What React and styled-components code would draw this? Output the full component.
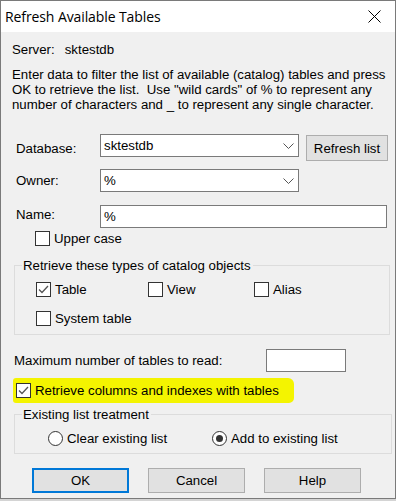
import React from "react";
import styled, { createGlobalStyle } from "styled-components";

const GlobalStyle = createGlobalStyle`
  html, body {
    margin: 0;
    padding: 0;
    background: #d4d4d4;
  }
  body {
    font-family: "Liberation Sans", Arial, sans-serif;
    font-size: 13.25px;
    color: #000;
  }
  * {
    box-sizing: border-box;
  }
`;

const Window = styled.div`
  width: 396px;
  height: 499px;
  border: 1px solid #7a7a7a;
  display: flex;
  flex-direction: column;
  background: #f0f0f0;
`;

const TitleBar = styled.div`
  height: 31px;
  background: #fff;
  display: flex;
  align-items: center;
  justify-content: space-between;
  padding: 0 14px 0 4px;
  flex-shrink: 0;
`;

const Title = styled.span`
  font-family: "Open Sans", "Liberation Sans", sans-serif;
  font-size: 14px;
  letter-spacing: -0.1px;
  color: #000;
`;

const CloseIcon = styled.svg`
  width: 13px;
  height: 13px;
  display: block;
`;

const Body = styled.div`
  flex: 1;
  display: flex;
  flex-direction: column;
  padding: 10px 0 0 11px;
  line-height: 15px;
`;

const Server = styled.div`
  display: flex;
  gap: 10px;
`;

const Intro = styled.p`
  margin: 10px 0 0;
  width: 382px;
`;

const Row = styled.div`
  display: flex;
  align-items: flex-start;
  margin-top: ${(p) => p.$top || 0}px;
  padding-left: ${(p) => p.$indent || 0}px;
`;

const FieldLabel = styled.label`
  width: 84px;
  flex-shrink: 0;
  line-height: 23px;
  position: relative;
  top: ${(p) => p.$shift || 0}px;
`;

const SelectBox = styled.div`
  width: 199px;
  height: 23px;
  background: #fff;
  border: 1px solid #7a7a7a;
  display: flex;
  align-items: center;
  justify-content: space-between;
  padding: 0 4px 0 3px;
`;

const Chevron = styled.svg`
  width: 11px;
  height: 6px;
  display: block;
`;

const TextInput = styled.div`
  width: ${(p) => p.$width}px;
  height: 23px;
  background: #fff;
  border: 1px solid #7a7a7a;
  display: flex;
  align-items: center;
  padding: 0 3px;
`;

const Button = styled.button`
  width: ${(p) => p.$width || 97}px;
  height: ${(p) => p.$height || 25}px;
  margin: ${(p) => p.$top || 0}px 0 0 ${(p) => p.$left || 0}px;
  background: #e1e1e1;
  border: ${(p) => (p.$default ? "2px solid #0078d7" : "1px solid #adadad")};
  font-family: "Liberation Sans", Arial, sans-serif;
  font-size: 13.25px;
  color: #000;
  padding: 0;
  display: flex;
  align-items: center;
  justify-content: center;
`;

const Check = styled.label`
  display: flex;
  align-items: center;
  gap: 4px;
  height: 15px;
`;

const Box = styled.span`
  width: 15px;
  height: 15px;
  border: 1px solid #333;
  background: #fff;
  display: flex;
  align-items: center;
  justify-content: center;
  flex-shrink: 0;
`;

const Tick = styled.svg`
  width: 11px;
  height: 9px;
  display: block;
`;

const Group = styled.fieldset`
  margin: ${(p) => p.$top || 0}px 0 0 2px;
  width: ${(p) => p.$width}px;
  border: 1px solid #dcdcdc;
  padding: 0;
`;

const Legend = styled.legend`
  margin-left: 7px;
  padding: 0 2px 0 1px;
  line-height: 15px;
`;

const GroupGrid = styled.div`
  display: grid;
  grid-template-columns: 112px 106px auto;
  row-gap: 14px;
  padding: 9px 0 8px 21px;
`;

const RadioRow = styled.div`
  display: grid;
  grid-template-columns: 164px auto;
  padding: 9px 0 7px 33px;
`;

const Radio = styled.span`
  width: 15px;
  height: 15px;
  border-radius: 50%;
  border: 1px solid #333;
  background: #fff;
  display: flex;
  align-items: center;
  justify-content: center;
  flex-shrink: 0;
  &::after {
    content: "";
    width: 7px;
    height: 7px;
    border-radius: 50%;
    background: ${(p) => (p.$on ? "#333" : "transparent")};
  }
`;

const MaxLabel = styled.span`
  width: 252px;
  line-height: 23px;
`;

const Highlight = styled.div`
  margin-top: 6px;
  margin-left: 1px;
  width: 281px;
  height: 25px;
  background: #f4f400;
  border-radius: 3px 6px 5px 3px;
  display: flex;
  align-items: center;
  padding-left: 3px;
`;

const Footer = styled.div`
  display: flex;
  margin-top: 14px;
  padding-left: 20px;
  gap: 19px;
`;

const CheckItem = ({ checked, children }) => (
  <Check>
    <Box>
      {checked && (
        <Tick viewBox="0 0 11 9">
          <path d="M1 4.5 L4 7.5 L10 1" fill="none" stroke="#555" strokeWidth="1.3" />
        </Tick>
      )}
    </Box>
    {children}
  </Check>
);

const RadioItem = ({ on, children }) => (
  <Check>
    <Radio $on={on} />
    {children}
  </Check>
);

const Select = ({ value }) => (
  <SelectBox>
    <span>{value}</span>
    <Chevron viewBox="0 0 11 6">
      <path d="M0.5 0.5 L5.5 5.5 L10.5 0.5" fill="none" stroke="#555" strokeWidth="1" />
    </Chevron>
  </SelectBox>
);

export default function App() {
  return (
    <>
      <GlobalStyle />
      <Window>
        <TitleBar>
          <Title>Refresh Available Tables</Title>
          <CloseIcon viewBox="0 0 13 13">
            <path d="M0.5 0.5 L12.5 12.5 M12.5 0.5 L0.5 12.5" stroke="#000" strokeWidth="1" />
          </CloseIcon>
        </TitleBar>
        <Body>
          <Server>
            <span>Server:</span>
            <span>sktestdb</span>
          </Server>
          <Intro>
            Enter data to filter the list of available (catalog) tables and press OK to
            retrieve the list.&nbsp; Use "wild cards" of % to represent any number of
            characters and _ to represent any single character.
          </Intro>
          <Row $top={22} $indent={4}>
            <FieldLabel $shift={3}>Database:</FieldLabel>
            <Select value="sktestdb" />
            <Button $width={82} $height={26} $left={7} $top={1}>
              Refresh list
            </Button>
          </Row>
          <Row $top={8} $indent={4}>
            <FieldLabel>Owner:</FieldLabel>
            <Select value="%" />
          </Row>
          <Row $top={13} $indent={4}>
            <FieldLabel $shift={-2}>Name:</FieldLabel>
            <TextInput $width={287}>%</TextInput>
          </Row>
          <Row $top={3} $indent={23}>
            <CheckItem>Upper case</CheckItem>
          </Row>
          <Group $top={12} $width={376}>
            <Legend>Retrieve these types of catalog objects</Legend>
            <GroupGrid>
              <CheckItem checked>Table</CheckItem>
              <CheckItem>View</CheckItem>
              <CheckItem>Alias</CheckItem>
              <CheckItem>System table</CheckItem>
            </GroupGrid>
          </Group>
          <Row $top={14} $indent={2}>
            <MaxLabel>Maximum number of tables to read:</MaxLabel>
            <TextInput $width={80} />
          </Row>
          <Highlight>
            <CheckItem checked>Retrieve columns and indexes with tables</CheckItem>
          </Highlight>
          <Group $top={4} $width={378}>
            <Legend>Existing list treatment</Legend>
            <RadioRow>
              <RadioItem>Clear existing list</RadioItem>
              <RadioItem on>Add to existing list</RadioItem>
            </RadioRow>
          </Group>
          <Footer>
            <Button $default>OK</Button>
            <Button>Cancel</Button>
            <Button>Help</Button>
          </Footer>
        </Body>
      </Window>
    </>
  );
}
